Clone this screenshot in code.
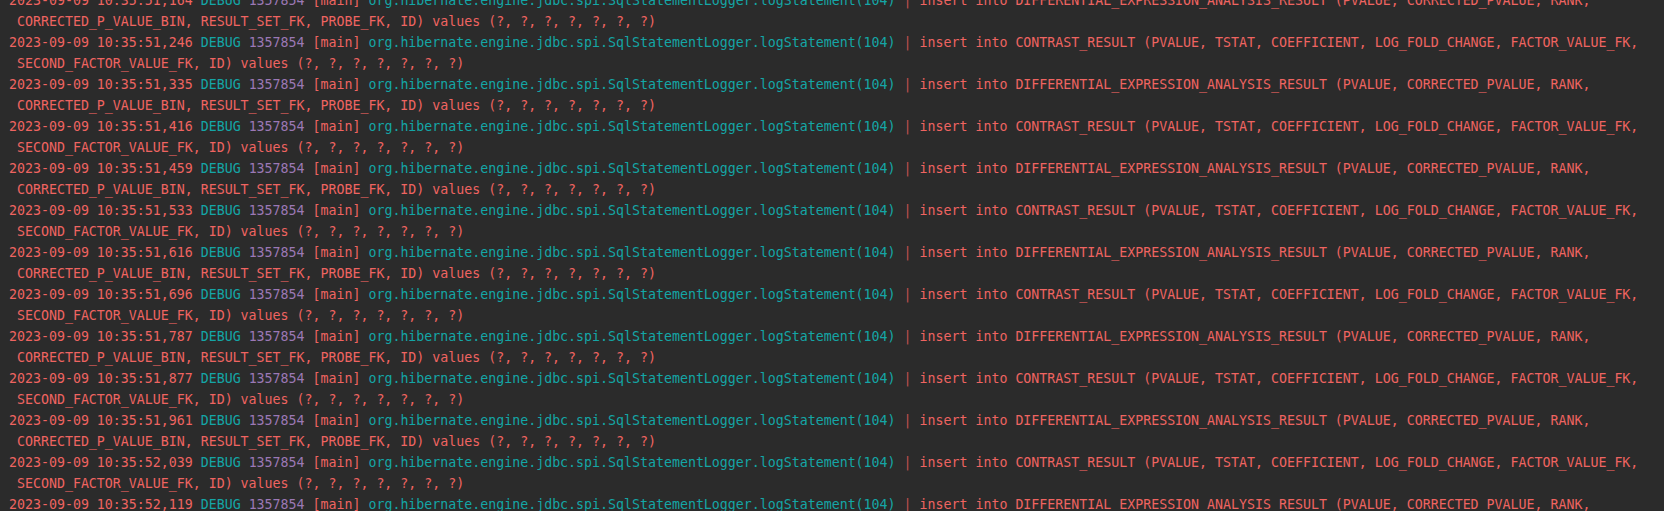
const DIFF_HEAD =
  'insert into DIFFERENTIAL_EXPRESSION_ANALYSIS_RESULT (PVALUE, CORRECTED_PVALUE, RANK,'
const DIFF_TAIL = ' CORRECTED_P_VALUE_BIN, RESULT_SET_FK, PROBE_FK, ID) values (?, ?, ?, ?, ?, ?, ?)'
const CONTRAST_HEAD =
  'insert into CONTRAST_RESULT (PVALUE, TSTAT, COEFFICIENT, LOG_FOLD_CHANGE, FACTOR_VALUE_FK,'
const CONTRAST_TAIL = ' SECOND_FACTOR_VALUE_FK, ID) values (?, ?, ?, ?, ?, ?, ?)'

const times = [
  '51,164',
  '51,246',
  '51,335',
  '51,416',
  '51,459',
  '51,533',
  '51,616',
  '51,696',
  '51,787',
  '51,877',
  '51,961',
  '52,039',
  '52,119',
]

const LogEntry = ({ time, diff }: { time: string; diff: boolean }) => (
  <>
    <div className="whitespace-pre">
      <span className="text-[#ef6461]">2023-09-09 10:35:{time} </span>
      <span className="text-[#14a6a6]">DEBUG </span>
      <span className="text-[#9b78b5]">1357854 </span>
      <span className="text-[#ef6461]">[main] </span>
      <span className="text-[#14a6a6]">
        org.hibernate.engine.jdbc.spi.SqlStatementLogger.logStatement(104){' '}
      </span>
      <span className="text-[#c0504e]">| </span>
      <span className="text-[#ef6461]">{diff ? DIFF_HEAD : CONTRAST_HEAD}</span>
    </div>
    <div className="whitespace-pre text-[#ef6461]">{diff ? DIFF_TAIL : CONTRAST_TAIL}</div>
  </>
)

export default function App() {
  return (
    <div className="h-[511px] w-[1664px] overflow-hidden bg-[#2b2b2b]">
      <div className="-mt-[10px] pl-[9px] font-['DejaVu_Sans_Mono',monospace] text-[13.28px] leading-[21px]">
        {times.map((t, i) => (
          <LogEntry key={t} time={t} diff={i % 2 === 0} />
        ))}
      </div>
    </div>
  )
}
